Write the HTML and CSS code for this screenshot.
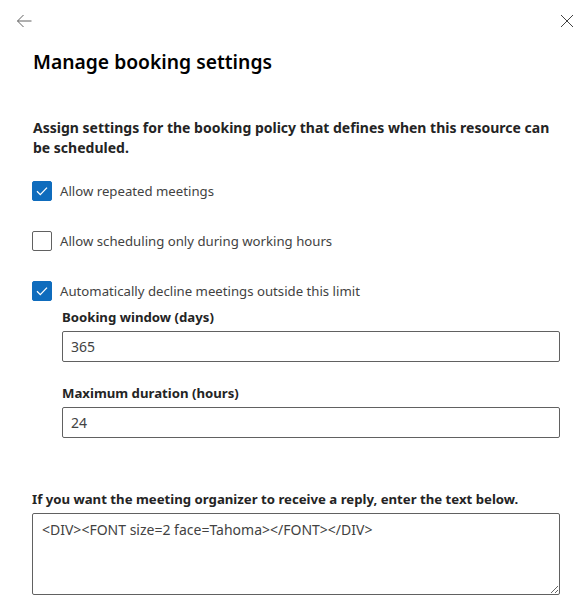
FILE: index.html
```html
<!DOCTYPE html>
<html>
  <head>
    <title>Manage booking settings</title>
    <link rel="stylesheet" href="styles.css">
  </head>

  <body>
    <div class="panel">
      <div class="topbar">
        <button class="icon-btn" title="Back">
          <svg width="16" height="16" viewBox="0 0 16 16">
            <path d="M15.5 8H1.5M7.5 2L1.5 8l6 6" fill="none" stroke="#616161" stroke-width="1"/>
          </svg>
        </button>
        <button class="icon-btn" title="Close">
          <svg width="14" height="14" viewBox="0 0 14 14">
            <path d="M1 1l12 12M13 1L1 13" fill="none" stroke="#424242" stroke-width="1"/>
          </svg>
        </button>
      </div>

      <h1>Manage booking settings</h1>

      <p class="intro">
        Assign settings for the booking policy that defines when this resource can
        be scheduled.
      </p>

      <label class="check">
        <span class="box checked">
          <svg width="14" height="14" viewBox="0 0 14 14"><path d="M2 7.3l3.3 3.3L12 3.6" fill="none" stroke="#fff" stroke-width="1.3"/></svg>
        </span>
        Allow repeated meetings
      </label>

      <label class="check">
        <span class="box"></span>
        Allow scheduling only during working hours
      </label>

      <label class="check check-last">
        <span class="box checked">
          <svg width="14" height="14" viewBox="0 0 14 14"><path d="M2 7.3l3.3 3.3L12 3.6" fill="none" stroke="#fff" stroke-width="1.3"/></svg>
        </span>
        Automatically decline meetings outside this limit
      </label>

      <div class="limits">
        <div class="field">
          <div class="field-label">Booking window (days)</div>
          <input type="text" class="text-input" value="365">
        </div>
        <div class="field">
          <div class="field-label">Maximum duration (hours)</div>
          <input type="text" class="text-input" value="24">
        </div>
      </div>

      <div class="reply">
        <div class="field-label">If you want the meeting organizer to receive a reply, enter the text below.</div>
        <textarea class="reply-text">&lt;DIV&gt;&lt;FONT size=2 face=Tahoma&gt;&lt;/FONT&gt;&lt;/DIV&gt;</textarea>
      </div>
    </div>
  </body>
</html>
```

FILE: styles.css
```css
body {
  font-family: "Noto Sans", "Open Sans", sans-serif;
  background-color: #fff;
  color: #242424;
  margin: 0;
  padding: 0;
}

.panel {
  padding: 0 25px 0 32px;
}

.topbar {
  display: flex;
  justify-content: space-between;
  align-items: center;
  height: 42px;
  margin-left: -16px;
  margin-right: -15px;
}

.icon-btn {
  border: none;
  background: none;
  padding: 0;
  width: 16px;
  height: 16px;
  display: flex;
  align-items: center;
  justify-content: center;
  cursor: pointer;
}

h1 {
  font-size: 19.3px;
  font-weight: 600;
  margin: 6px 0 0 1px;
  line-height: 28px;
  color: #000;
}

.intro {
  font-size: 14px;
  font-weight: 700;
  line-height: 20px;
  margin: 42px 0 23px 1px;
  color: #242424;
}

.check {
  display: flex;
  align-items: center;
  gap: 8px;
  font-size: 13.2px;
  color: #424242;
  height: 20px;
  margin-bottom: 30px;
}

.check-last {
  margin-bottom: 0;
}

.box {
  width: 18px;
  height: 18px;
  border: 1px solid #616161;
  border-radius: 2px;
  display: flex;
  align-items: center;
  justify-content: center;
}

.box.checked {
  background-color: #0f6cbd;
  border-color: #0f6cbd;
}

.limits {
  padding-left: 30px;
  margin-top: 6px;
}

.field {
  margin-bottom: 21px;
}

.field-label {
  font-size: 13.2px;
  font-weight: 700;
  line-height: 20px;
  margin-bottom: 4px;
  color: #242424;
}

.text-input {
  display: block;
  box-sizing: border-box;
  width: 100%;
  height: 31px;
  border: 1px solid #616161;
  border-radius: 2px;
  padding: 0 8px;
  font-family: inherit;
  font-size: 14px;
  color: #424242;
}

.reply {
  margin-top: 51px;
}

.reply-text {
  display: block;
  box-sizing: border-box;
  width: 100%;
  height: 82px;
  border: 1px solid #616161;
  border-radius: 2px;
  padding: 6px 9px;
  font-family: inherit;
  font-size: 14px;
  color: #424242;
  resize: vertical;
}
```
